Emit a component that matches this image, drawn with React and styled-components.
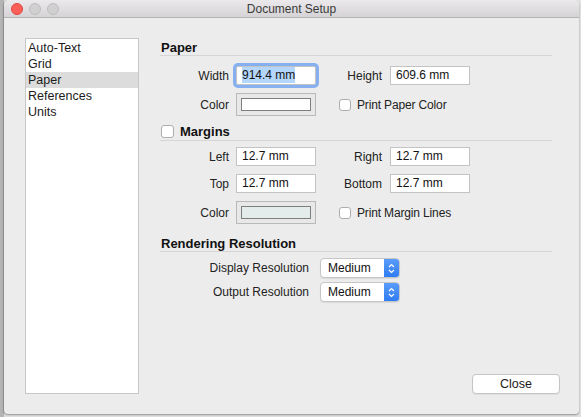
import React from "react";
import styled, { createGlobalStyle } from "styled-components";

const GlobalStyle = createGlobalStyle`
  html, body {
    margin: 0;
    padding: 0;
    background: #d4d4d4;
  }
  body {
    font-family: "Liberation Sans", Arial, sans-serif;
    color: #222;
  }
`;

const Screen = styled.div`
  width: 581px;
  height: 417px;
  overflow: hidden;
  background: linear-gradient(to right, #b4b4b4 0, #b4b4b4 4px, #e2e2e2 4px);
`;

const Window = styled.div`
  margin-left: 4px;
  width: 575px;
  height: 414px;
  background: #ececec;
  border-radius: 5px 5px 4px 4px;
  box-shadow: 0 1px 2px rgba(0, 0, 0, 0.35), -1px 0 1px rgba(0, 0, 0, 0.15);
  display: flex;
  flex-direction: column;
  overflow: hidden;
`;

const TitleBar = styled.div`
  height: 18px;
  flex-shrink: 0;
  display: flex;
  align-items: center;
  position: relative;
  background: linear-gradient(#ebe9eb, #d5d3d5);
  border-bottom: 1px solid #b3b3b3;
  box-sizing: border-box;
`;

const Lights = styled.div`
  display: flex;
  gap: 6px;
  padding-left: 7px;
  margin-top: 1px;
`;

const Light = styled.span`
  width: 12px;
  height: 12px;
  border-radius: 50%;
  box-sizing: border-box;
  background: ${(p) => (p.$red ? "#fc5f57" : "#d1d0d1")};
  border: 1px solid ${(p) => (p.$red ? "#de463f" : "#bdbcbd")};
`;

const Title = styled.div`
  position: absolute;
  left: 0;
  right: 0;
  text-align: center;
  font-size: 12px;
  color: #3a3a3a;
  pointer-events: none;
`;

const Body = styled.div`
  flex: 1;
  display: flex;
  gap: 21px;
  padding: 20px 19px 20px 21px;
`;

const List = styled.div`
  width: 114px;
  flex-shrink: 0;
  background: #fff;
  border: 1px solid #c7c7c7;
  box-sizing: border-box;
  padding-top: 1px;
`;

const ListItem = styled.div`
  height: 16px;
  line-height: 16px;
  padding-left: 2px;
  font-size: 12.5px;
  color: #1c1c1c;
  background: ${(p) => (p.$selected ? "#dcdcdc" : "transparent")};
`;

const Panel = styled.div`
  flex: 1;
  display: flex;
  flex-direction: column;
  padding-top: 1px;
`;

const Section = styled.div`
  width: 392px;
`;

const Header = styled.div`
  display: flex;
  align-items: center;
  gap: 6px;
  height: ${(p) => p.$h || 16}px;
  border-bottom: 1px solid #d6d6d6;
  margin-top: ${(p) => p.$mt || 0}px;
  font-size: 13px;
  font-weight: bold;
  color: #111;
  padding-left: 1px;
`;

const Grid = styled.div`
  display: grid;
  grid-template-columns: 76px 80px 74px 80px;
  align-items: center;
  row-gap: 8px;
  margin-top: ${(p) => p.$mt || 0}px;
`;

const Label = styled.div`
  font-size: 12px;
  text-align: right;
  padding-right: ${(p) => p.$pr || 7}px;
  color: #222;
`;

const Field = styled.div`
  height: 19px;
  box-sizing: border-box;
  background: #fff;
  border: 1px solid #c3c3c3;
  font-size: 12px;
  line-height: 17px;
  padding-left: 5px;
  color: #111;
  box-shadow: ${(p) =>
    p.$focus ? "0 0 0 3px rgba(118, 166, 241, 0.85)" : "none"};
  border-radius: ${(p) => (p.$focus ? "2px" : "0")};
`;

const Selected = styled.span`
  background: #b4d6fd;
  padding: 1px 0;
`;

const Well = styled.div`
  height: 23px;
  box-sizing: border-box;
  border: 1px solid #b9b9b9;
  background: #e8e8e8;
  padding: 4px 4px;
`;

const Swatch = styled.div`
  height: 13px;
  box-sizing: border-box;
  border: 1px solid #7e7e7e;
  background: ${(p) => p.$color};
`;

const Check = styled.label`
  grid-column: span 2;
  display: flex;
  align-items: center;
  gap: 6px;
  padding-left: 23px;
  font-size: 12px;
  letter-spacing: -0.15px;
  color: #222;
`;

const Box = styled.span`
  width: ${(p) => p.$size || 12}px;
  height: ${(p) => p.$size || 12}px;
  box-sizing: border-box;
  border: 1px solid #adadad;
  border-radius: 3px;
  background: #fff;
  flex-shrink: 0;
`;

const ResGrid = styled.div`
  display: grid;
  grid-template-columns: 160px 80px;
  align-items: center;
  row-gap: 4px;
  margin-top: 6px;
`;

const Popup = styled.div`
  height: 20px;
  box-sizing: border-box;
  display: flex;
  background: #fff;
  border: 1px solid #c6c6c6;
  border-radius: 4px;
  box-shadow: 0 1px 1px rgba(0, 0, 0, 0.08);
  overflow: hidden;
  font-size: 12px;
`;

const PopupText = styled.span`
  flex: 1;
  padding-left: 7px;
  line-height: 18px;
  color: #111;
`;

const Stepper = styled.span`
  width: 15px;
  background: linear-gradient(#5a9cf9, #2f7cf5);
  display: flex;
  align-items: center;
  justify-content: center;
`;

const Footer = styled.div`
  margin-top: auto;
  display: flex;
  justify-content: flex-end;
`;

const Button = styled.button`
  width: 88px;
  height: 20px;
  background: #fff;
  border: 1px solid #c4c4c4;
  border-radius: 4px;
  box-shadow: 0 1px 1px rgba(0, 0, 0, 0.06);
  font-family: inherit;
  font-size: 12.5px;
  color: #1a1a1a;
  padding: 0;
`;

const Arrows = () => (
  <svg width="7" height="11" viewBox="0 0 7 11">
    <path
      d="M1 4 L3.5 1.5 L6 4 M1 7 L3.5 9.5 L6 7"
      fill="none"
      stroke="#fff"
      strokeWidth="1.2"
    />
  </svg>
);

const items = ["Auto-Text", "Grid", "Paper", "References", "Units"];

export default function App() {
  return (
    <Screen>
      <GlobalStyle />
      <Window>
        <TitleBar>
          <Lights>
            <Light $red />
            <Light />
            <Light />
          </Lights>
          <Title>Document Setup</Title>
        </TitleBar>
        <Body>
          <List>
            {items.map((it) => (
              <ListItem key={it} $selected={it === "Paper"}>
                {it}
              </ListItem>
            ))}
          </List>
          <Panel>
            <Section>
              <Header>Paper</Header>
              <Grid $mt={10}>
                <Label>Width</Label>
                <Field $focus>
                  <Selected>914.4 mm</Selected>
                </Field>
                <Label $pr={8}>Height</Label>
                <Field>609.6 mm</Field>
                <Label>Color</Label>
                <Well>
                  <Swatch $color="#fff" />
                </Well>
                <Check>
                  <Box />
                  Print Paper Color
                </Check>
              </Grid>
              <Header $h={18} $mt={6}>
                <Box $size={13} />
                Margins
              </Header>
              <Grid $mt={6}>
                <Label>Left</Label>
                <Field>12.7 mm</Field>
                <Label $pr={8}>Right</Label>
                <Field>12.7 mm</Field>
                <Label>Top</Label>
                <Field>12.7 mm</Field>
                <Label $pr={8}>Bottom</Label>
                <Field>12.7 mm</Field>
                <Label>Color</Label>
                <Well>
                  <Swatch $color="#e4ebeb" />
                </Well>
                <Check>
                  <Box />
                  Print Margin Lines
                </Check>
              </Grid>
              <Header $mt={11}>Rendering Resolution</Header>
              <ResGrid>
                <Label $pr={11}>Display Resolution</Label>
                <Popup>
                  <PopupText>Medium</PopupText>
                  <Stepper>
                    <Arrows />
                  </Stepper>
                </Popup>
                <Label $pr={11}>Output Resolution</Label>
                <Popup>
                  <PopupText>Medium</PopupText>
                  <Stepper>
                    <Arrows />
                  </Stepper>
                </Popup>
              </ResGrid>
            </Section>
            <Footer>
              <Button>Close</Button>
            </Footer>
          </Panel>
        </Body>
      </Window>
    </Screen>
  );
}
